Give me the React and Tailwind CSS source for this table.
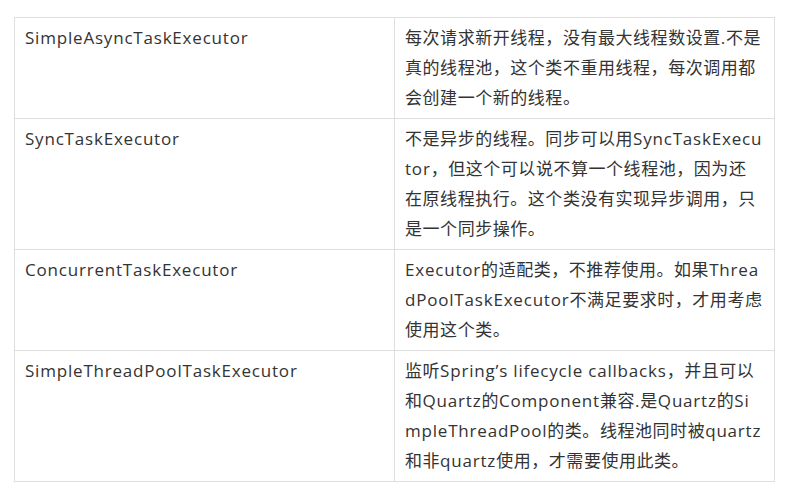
import React from 'react'

const rows = [
  {
    name: 'SimpleAsyncTaskExecutor',
    desc: '每次请求新开线程，没有最大线程数设置.不是真的线程池，这个类不重用线程，每次调用都会创建一个新的线程。',
  },
  {
    name: 'SyncTaskExecutor',
    desc: '不是异步的线程。同步可以用SyncTaskExecutor，但这个可以说不算一个线程池，因为还在原线程执行。这个类没有实现异步调用，只是一个同步操作。',
  },
  {
    name: 'ConcurrentTaskExecutor',
    desc: 'Executor的适配类，不推荐使用。如果ThreadPoolTaskExecutor不满足要求时，才用考虑使用这个类。',
  },
  {
    name: 'SimpleThreadPoolTaskExecutor',
    desc: '监听Spring’s lifecycle callbacks，并且可以和Quartz的Component兼容.是Quartz的SimpleThreadPool的类。线程池同时被quartz和非quartz使用，才需要使用此类。',
  },
]

// latin runs get a touch more spacing than the CJK text
const Mixed = ({ text }) =>
  text.split(/([\x20-\x7E’]+)/).map((part, i) =>
    /^[\x20-\x7E’]+$/.test(part) ? (
      <span key={i} className="tracking-[0.8px]">{part}</span>
    ) : (
      <React.Fragment key={i}>{part}</React.Fragment>
    )
  )

const App = () => {
  return (
    <div className="w-[797px] h-[500px] bg-white pt-[17px] pl-[14px]">
      <table
        className="border-collapse table-fixed w-[760px] text-[17px] leading-[30px] tracking-[0.544px] text-[#333]"
        style={{ fontFamily: '"Open Sans", "Noto Sans CJK SC", sans-serif' }}
      >
        <colgroup>
          <col className="w-[380px]" />
          <col className="w-[380px]" />
        </colgroup>
        <tbody>
          {rows.map((row) => (
            <tr key={row.name}>
              <td className="border border-[#dfdfdf] align-top px-[10px] py-[5px] break-all">
                <Mixed text={row.name} />
              </td>
              <td className="border border-[#dfdfdf] align-top pl-[10px] pr-[11px] py-[5px] break-all">
                <Mixed text={row.desc} />
              </td>
            </tr>
          ))}
        </tbody>
      </table>
    </div>
  )
}

export default App
